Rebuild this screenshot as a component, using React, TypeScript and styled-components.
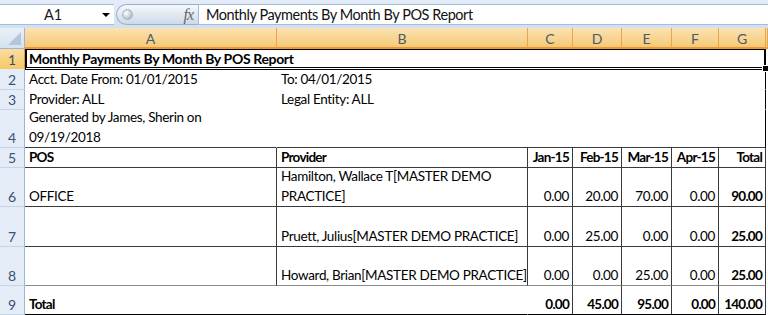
import React from 'react';
import styled, { createGlobalStyle, css } from 'styled-components';

const GlobalStyle = createGlobalStyle`
  html, body {
    margin: 0;
    padding: 0;
    background: #ffffff;
    overflow: hidden;
  }
  body {
    font-family: Lato, "Liberation Sans", sans-serif;
  }
`;

// 25 + 252 + 251 + 45 + 49 + 50 + 47 + 47 + 2 = 768
const COLS = '25px 252px 251px 45px 49px 50px 47px 47px 2px';
const GRID = '#3a3a3a';
const LIGHT_GRID = '#8c8c8c';

const Page = styled.div`
  width: 768px;
  height: 315px;
  overflow: hidden;
  font-family: Lato, "Liberation Sans", sans-serif;
  color: #000;
`;

const FormulaBar = styled.div`
  display: flex;
  height: 28px;
  box-sizing: border-box;
  padding: 4px 0 3px;
  background: linear-gradient(#e4edf8, #d3e0f0);
`;

const NameBox = styled.div`
  display: flex;
  align-items: center;
  width: 114px;
  background: #fff;
  border-top: 1px solid #a3bcdb;
  border-bottom: 1px solid #a3bcdb;
  font-size: 14.5px;
  color: #1b1b1b;
`;

const NameText = styled.span`
  flex: 1;
  text-align: center;
  padding-left: 4px;
`;

const DropArrow = styled.span`
  width: 0;
  height: 0;
  margin-right: 4px;
  border-left: 4px solid transparent;
  border-right: 4px solid transparent;
  border-top: 4px solid #000;
`;

const FxPill = styled.div`
  display: flex;
  align-items: center;
  justify-content: space-between;
  width: 82px;
  margin-left: 2px;
  box-sizing: border-box;
  border: 1px solid #98afcc;
  border-right: none;
  border-radius: 11px 0 0 11px;
  background: linear-gradient(#f6f9fc, #dfe7f1 55%, #cfd9e7);
`;

const Knob = styled.span`
  width: 9px;
  height: 9px;
  margin-left: 5px;
  border-radius: 50%;
  background: radial-gradient(circle at 35% 35%, #ffffff, #b8c0cb 70%, #9aa3af);
  border: 1px solid #aab4c1;
`;

const FxLabel = styled.span`
  font-family: "Liberation Serif", serif;
  font-style: italic;
  font-size: 16px;
  color: #666;
  padding-right: 5px;
  letter-spacing: -1px;
`;

const FormulaInput = styled.div`
  flex: 1;
  display: flex;
  align-items: center;
  padding-left: 7px;
  background: #fff;
  border: 1px solid #a3bcdb;
  border-right: none;
  font-size: 14.5px;
  letter-spacing: -0.45px;
  color: #111;
`;

const Row = styled.div<{ $h: number }>`
  display: grid;
  grid-template-columns: ${COLS};
  height: ${(p) => p.$h}px;
`;

const Corner = styled.div`
  position: relative;
  background: linear-gradient(#e9f0f9, #d6e2f1);
  border-right: 1px solid #9eb6ce;
  border-bottom: 1px solid #9eb6ce;
  &::after {
    content: '';
    position: absolute;
    right: 3px;
    bottom: 3px;
    width: 0;
    height: 0;
    border-left: 13px solid transparent;
    border-bottom: 13px solid #b4c6dc;
  }
`;

const ColHead = styled.div`
  display: flex;
  align-items: center;
  justify-content: center;
  padding-top: 2px;
  background: linear-gradient(#fbe2b4, #f8d797 45%, #f5ca76);
  border-right: 1px solid #f0a24a;
  border-bottom: 2px solid #f29436;
  font-size: 14px;
  color: #4b5a6c;
`;

const RowHead = styled.div<{ $active?: boolean }>`
  display: flex;
  align-items: flex-end;
  justify-content: center;
  box-sizing: border-box;
  font-size: 14px;
  line-height: 19px;
  color: #3c5170;
  background: #e4ecf7;
  border-right: 1px solid #9eb6ce;
  border-bottom: 1px solid #c6d5e6;
  ${(p) =>
    p.$active &&
    css`
      background: linear-gradient(#fbdba0, #f7c967);
      border-right: 1px solid #f29436;
      border-bottom: 1px solid #f0a24a;
    `}
`;

type CellProps = {
  $span?: number;
  $right?: string;
  $bottom?: string;
  $align?: 'left' | 'right';
  $bold?: boolean;
};

const Cell = styled.div<CellProps>`
  display: flex;
  flex-direction: column;
  justify-content: flex-end;
  align-items: ${(p) => (p.$align === 'right' ? 'flex-end' : 'flex-start')};
  text-align: ${(p) => p.$align || 'left'};
  grid-column: span ${(p) => p.$span || 1};
  box-sizing: border-box;
  padding: ${(p) => (p.$align === 'right' ? '0 3px 0 1px' : '0 2px 0 4px')};
  font-size: 13.5px;
  line-height: 19.5px;
  font-weight: ${(p) => (p.$bold ? 700 : 400)};
  letter-spacing: ${(p) => (p.$bold ? '-0.75px' : '-0.33px')};
  white-space: nowrap;
  overflow: hidden;
  border-right: ${(p) => (p.$right ? `1px solid ${p.$right}` : '1px solid transparent')};
  border-bottom: ${(p) => (p.$bottom ? `1px solid ${p.$bottom}` : '1px solid transparent')};
`;

const TitleCell = styled(Cell)`
  position: relative;
  overflow: visible;
  border-top: 1px solid #000;
  border-left: 2px solid #000;
  border-right: 2px solid #000;
  border-bottom: 3px double #000;
  padding-left: 2px;
  font-size: 14px;
  letter-spacing: -0.35px;
  line-height: 17px;
`;

const FillHandle = styled.span`
  position: absolute;
  right: -5px;
  bottom: -5px;
  width: 5px;
  height: 5px;
  background: #000;
  border: 1px solid #fff;
`;

const columns = ['A', 'B', 'C', 'D', 'E', 'F', 'G'];
const months = ['Jan-15', 'Feb-15', 'Mar-15', 'Apr-15'];

type Line = {
  n: number;
  h: number;
  pos: string;
  provider: React.ReactNode;
  values: string[];
  total: string;
  bottom: string;
};

const lines: Line[] = [
  {
    n: 6,
    h: 39,
    pos: 'OFFICE',
    provider: (
      <>
        Hamilton, Wallace T[MASTER DEMO
        <br />
        PRACTICE]
      </>
    ),
    values: ['0.00', '20.00', '70.00', '0.00'],
    total: '90.00',
    bottom: GRID,
  },
  {
    n: 7,
    h: 40,
    pos: '',
    provider: 'Pruett, Julius[MASTER DEMO PRACTICE]',
    values: ['0.00', '25.00', '0.00', '0.00'],
    total: '25.00',
    bottom: GRID,
  },
  {
    n: 8,
    h: 39,
    pos: '',
    provider: 'Howard, Brian[MASTER DEMO PRACTICE]',
    values: ['0.00', '0.00', '25.00', '0.00'],
    total: '25.00',
    bottom: LIGHT_GRID,
  },
];

const totals = ['0.00', '45.00', '95.00', '0.00'];

export default function App() {
  return (
    <Page>
      <GlobalStyle />
      <FormulaBar>
        <NameBox>
          <NameText>A1</NameText>
          <DropArrow />
        </NameBox>
        <FxPill>
          <Knob />
          <FxLabel>fx</FxLabel>
        </FxPill>
        <FormulaInput>Monthly Payments By Month By POS Report</FormulaInput>
      </FormulaBar>

      <Row $h={21}>
        <Corner />
        {columns.map((c) => (
          <ColHead key={c}>{c}</ColHead>
        ))}
        <ColHead />
      </Row>

      <Row $h={20}>
        <RowHead $active>1</RowHead>
        <TitleCell $span={7} $bold>
          Monthly Payments By Month By POS Report
          <FillHandle />
        </TitleCell>
      </Row>

      <Row $h={21}>
        <RowHead>2</RowHead>
        <Cell>Acct. Date From: 01/01/2015</Cell>
        <Cell $span={6} $right="#000">
          To: 04/01/2015
        </Cell>
      </Row>

      <Row $h={20}>
        <RowHead>3</RowHead>
        <Cell>Provider: ALL</Cell>
        <Cell $span={6} $right="#000">
          Legal Entity: ALL
        </Cell>
      </Row>

      <Row $h={38}>
        <RowHead>4</RowHead>
        <Cell $bottom={GRID}>
          Generated by James, Sherin on
          <br />
          09/19/2018
        </Cell>
        <Cell $span={6} $right="#000" $bottom={GRID} />
      </Row>

      <Row $h={20}>
        <RowHead>5</RowHead>
        <Cell $bold $right={GRID} $bottom={GRID}>
          POS
        </Cell>
        <Cell $bold $right={GRID} $bottom={GRID}>
          Provider
        </Cell>
        {months.map((m) => (
          <Cell key={m} $bold $align="right" $right={GRID} $bottom={GRID}>
            {m}
          </Cell>
        ))}
        <Cell $bold $align="right" $right={GRID} $bottom={GRID}>
          Total
        </Cell>
      </Row>

      {lines.map((l) => (
        <Row key={l.n} $h={l.h}>
          <RowHead>{l.n}</RowHead>
          <Cell $right={GRID} $bottom={l.bottom}>
            {l.pos}
          </Cell>
          <Cell $right={GRID} $bottom={l.bottom}>
            {l.provider}
          </Cell>
          {l.values.map((v, i) => (
            <Cell key={i} $align="right" $right={GRID} $bottom={l.bottom}>
              {v}
            </Cell>
          ))}
          <Cell $bold $align="right" $right={GRID} $bottom={l.bottom}>
            {l.total}
          </Cell>
        </Row>
      ))}

      <Row $h={29}>
        <RowHead>9</RowHead>
        <Cell $span={2} $bold $bottom="#000">
          Total
        </Cell>
        {totals.map((v, i) => (
          <Cell key={i} $bold $align="right" $right={GRID} $bottom="#000">
            {v}
          </Cell>
        ))}
        <Cell $bold $align="right" $right={GRID} $bottom="#000">
          140.00
        </Cell>
      </Row>
    </Page>
  );
}
